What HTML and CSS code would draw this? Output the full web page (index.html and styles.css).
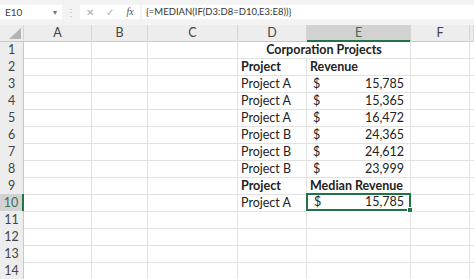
FILE: index.html
```html
<!DOCTYPE html>
<html lang="en">

<head>
    <meta charset="UTF-8">
    <meta name="viewport" content="width=device-width, initial-scale=1.0">
    <title>Median IF</title>
    <link rel="stylesheet" href="styles.css">
</head>

<body>

    <!-- Barra de fórmulas -->
    <div class="formula-bar">
        <div class="name-box">
            <span>E10</span>
            <span class="arrow">▾</span>
        </div>
        <div class="grip">⋮</div>
        <div class="fx-box">
            <span class="ico x">✕</span>
            <span class="ico check">✓</span>
            <span class="ico fx">fx</span>
        </div>
        <div class="formula">{=MEDIAN(IF(D3:D8=D10,E3:E8))}</div>
    </div>

    <!-- Planilha -->
    <div class="sheet">
        <div class="row head">
            <div class="corner"></div>
            <div class="col">A</div>
            <div class="col">B</div>
            <div class="col">C</div>
            <div class="col">D</div>
            <div class="col sel">E</div>
            <div class="col">F</div>
            <div class="col"></div>
        </div>

        <div class="row">
            <div class="num">1</div>
            <div class="cell"></div><div class="cell"></div><div class="cell"></div>
            <div class="cell title">Corporation Projects</div>
            <div class="cell"></div><div class="cell"></div>
        </div>
        <div class="row">
            <div class="num">2</div>
            <div class="cell"></div><div class="cell"></div><div class="cell"></div>
            <div class="cell bold">Project</div>
            <div class="cell bold">Revenue</div>
            <div class="cell"></div><div class="cell"></div>
        </div>
        <div class="row">
            <div class="num">3</div>
            <div class="cell"></div><div class="cell"></div><div class="cell"></div>
            <div class="cell">Project A</div>
            <div class="cell money"><span>$</span><span>15,785</span></div>
            <div class="cell"></div><div class="cell"></div>
        </div>
        <div class="row">
            <div class="num">4</div>
            <div class="cell"></div><div class="cell"></div><div class="cell"></div>
            <div class="cell">Project A</div>
            <div class="cell money"><span>$</span><span>15,365</span></div>
            <div class="cell"></div><div class="cell"></div>
        </div>
        <div class="row">
            <div class="num">5</div>
            <div class="cell"></div><div class="cell"></div><div class="cell"></div>
            <div class="cell">Project A</div>
            <div class="cell money"><span>$</span><span>16,472</span></div>
            <div class="cell"></div><div class="cell"></div>
        </div>
        <div class="row">
            <div class="num">6</div>
            <div class="cell"></div><div class="cell"></div><div class="cell"></div>
            <div class="cell">Project B</div>
            <div class="cell money"><span>$</span><span>24,365</span></div>
            <div class="cell"></div><div class="cell"></div>
        </div>
        <div class="row">
            <div class="num">7</div>
            <div class="cell"></div><div class="cell"></div><div class="cell"></div>
            <div class="cell">Project B</div>
            <div class="cell money"><span>$</span><span>24,612</span></div>
            <div class="cell"></div><div class="cell"></div>
        </div>
        <div class="row">
            <div class="num">8</div>
            <div class="cell"></div><div class="cell"></div><div class="cell"></div>
            <div class="cell">Project B</div>
            <div class="cell money"><span>$</span><span>23,999</span></div>
            <div class="cell"></div><div class="cell"></div>
        </div>
        <div class="row">
            <div class="num">9</div>
            <div class="cell"></div><div class="cell"></div><div class="cell"></div>
            <div class="cell bold">Project</div>
            <div class="cell bold">Median Revenue</div>
            <div class="cell"></div><div class="cell"></div>
        </div>
        <div class="row">
            <div class="num sel">10</div>
            <div class="cell"></div><div class="cell"></div><div class="cell"></div>
            <div class="cell">Project A</div>
            <div class="cell money active"><span>$</span><span>15,785</span></div>
            <div class="cell"></div><div class="cell"></div>
        </div>
        <div class="row">
            <div class="num">11</div>
            <div class="cell"></div><div class="cell"></div><div class="cell"></div>
            <div class="cell"></div><div class="cell"></div><div class="cell"></div><div class="cell"></div>
        </div>
        <div class="row">
            <div class="num">12</div>
            <div class="cell"></div><div class="cell"></div><div class="cell"></div>
            <div class="cell"></div><div class="cell"></div><div class="cell"></div><div class="cell"></div>
        </div>
        <div class="row">
            <div class="num">13</div>
            <div class="cell"></div><div class="cell"></div><div class="cell"></div>
            <div class="cell"></div><div class="cell"></div><div class="cell"></div><div class="cell"></div>
        </div>
        <div class="row">
            <div class="num">14</div>
            <div class="cell"></div><div class="cell"></div><div class="cell"></div>
            <div class="cell"></div><div class="cell"></div><div class="cell"></div><div class="cell"></div>
        </div>
    </div>

</body>

</html>
```

FILE: styles.css
```css
body {
    margin: 0;
    width: 474px;
    height: 279px;
    overflow: hidden;
    background: #ffffff;
    font-family: Lato, "Liberation Sans", sans-serif;
    color: #222;
}

/* barra de fórmulas */
.formula-bar {
    display: flex;
    align-items: center;
    height: 25px;
    padding-bottom: 2px;
    box-sizing: border-box;
    background: #f3f3f3;
    font-size: 10px;
    color: #444;
}

.name-box {
    display: flex;
    justify-content: space-between;
    align-items: center;
    width: 62px;
    height: 14px;
    padding: 0 5px;
    box-sizing: border-box;
    background: #fff;
}

.arrow {
    font-size: 8px;
    color: #777;
}

.grip {
    width: 18px;
    text-align: center;
    color: #bbb;
    font-size: 10px;
}

.fx-box {
    display: flex;
    align-items: center;
    width: 60px;
    height: 14px;
    background: #fff;
    color: #aaa;
}

.ico {
    width: 20px;
    text-align: center;
}

.ico.fx {
    font-family: "Liberation Serif", serif;
    font-style: italic;
    color: #555;
}

.formula {
    flex: 1;
    height: 14px;
    margin-left: 2px;
    padding-left: 4px;
    background: #fff;
    line-height: 14px;
    font-size: 9.5px;
    color: #333;
}

/* planilha */
.row {
    display: grid;
    grid-template-columns: 24px 68px 56px 90px 69px 104px 59px 1fr;
    height: 17px;
}

.row.head {
    height: 16px;
}

.corner,
.col {
    background: #ededed;
    border-right: 1px solid #d5d5d5;
    border-bottom: 1px solid #c8c8c8;
    box-sizing: border-box;
    text-align: center;
    font-size: 12.5px;
    line-height: 15px;
    color: #444;
}

.corner {
    position: relative;
}

.corner::after {
    content: "";
    position: absolute;
    right: 2px;
    bottom: 2px;
    border-left: 12px solid transparent;
    border-bottom: 11px solid #b4b4b4;
}

.col.sel {
    background: #d2d2d2;
    border-bottom: 2px solid #217346;
    color: #3d6e52;
}

.num {
    background: #ededed;
    border-right: 1px solid #c8c8c8;
    border-bottom: 1px solid #d5d5d5;
    box-sizing: border-box;
    text-align: center;
    font-size: 12.5px;
    line-height: 17px;
    color: #444;
}

.num.sel {
    background: #d2d2d2;
    border-right: 2px solid #217346;
    color: #3d6e52;
}

.cell {
    border-right: 1px solid #e2e2e2;
    border-bottom: 1px solid #e2e2e2;
    box-sizing: border-box;
    padding: 0 3px;
    font-size: 12.5px;
    line-height: 17px;
    white-space: nowrap;
}

.bold {
    font-weight: bold;
}

.title {
    grid-column: span 2;
    text-align: center;
    font-weight: bold;
}

.money {
    display: flex;
    justify-content: space-between;
    padding: 0 6px 0 6px;
}

.active {
    position: relative;
    border: 2px solid #217346;
    margin: -1px 0 0 -1px;
    height: 18px;
    line-height: 14px;
    padding: 0 5px 0 6px;
}

.active::after {
    content: "";
    position: absolute;
    right: -4px;
    bottom: -4px;
    width: 4px;
    height: 4px;
    background: #217346;
    border: 1px solid #fff;
}
```
